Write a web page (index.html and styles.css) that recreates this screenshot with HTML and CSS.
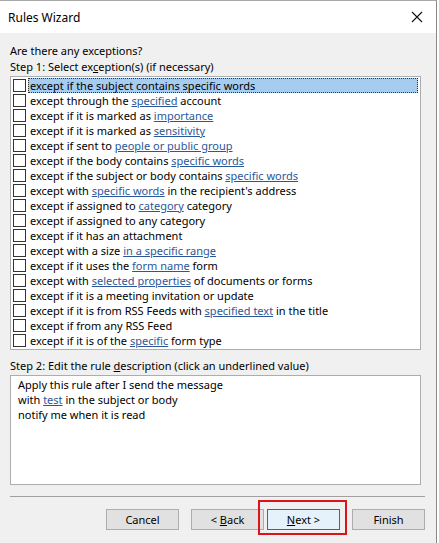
FILE: index.html
```html
<!DOCTYPE html>
<html lang="en">
<head>
  <meta charset="UTF-8">
  <title>Rules Wizard</title>
  <link rel="stylesheet" href="styles.css">
</head>
<body>

  <div class="dialog">
    <!-- Barra de título -->
    <div class="titlebar">
      <span class="title">Rules Wizard</span>
      <svg class="close" width="12" height="12" viewBox="0 0 12 12">
        <path d="M1 1 L11 11 M11 1 L1 11" stroke="#111" stroke-width="1.1" fill="none"/>
      </svg>
    </div>

    <div class="content">
      <p class="prompt">Are there any exceptions?</p>
      <p class="step">Step 1: Select ex<u>c</u>eption(s) (if necessary)</p>

      <!-- Lista de exceções -->
      <ul class="list">
        <li class="row selected"><span class="check"></span><span class="label">except if the subject contains specific words</span></li>
        <li class="row"><span class="check"></span><span class="label">except through the <a>specified</a> account</span></li>
        <li class="row"><span class="check"></span><span class="label">except if it is marked as <a>importance</a></span></li>
        <li class="row"><span class="check"></span><span class="label">except if it is marked as <a>sensitivity</a></span></li>
        <li class="row"><span class="check"></span><span class="label">except if sent to <a>people or public group</a></span></li>
        <li class="row"><span class="check"></span><span class="label">except if the body contains <a>specific words</a></span></li>
        <li class="row"><span class="check"></span><span class="label">except if the subject or body contains <a>specific words</a></span></li>
        <li class="row"><span class="check"></span><span class="label">except with <a>specific words</a> in the recipient's address</span></li>
        <li class="row"><span class="check"></span><span class="label">except if assigned to <a>category</a> category</span></li>
        <li class="row"><span class="check"></span><span class="label">except if assigned to any category</span></li>
        <li class="row"><span class="check"></span><span class="label">except if it has an attachment</span></li>
        <li class="row"><span class="check"></span><span class="label">except with a size <a>in a specific range</a></span></li>
        <li class="row"><span class="check"></span><span class="label">except if it uses the <a>form name</a> form</span></li>
        <li class="row"><span class="check"></span><span class="label">except with <a>selected properties</a> of documents or forms</span></li>
        <li class="row"><span class="check"></span><span class="label">except if it is a meeting invitation or update</span></li>
        <li class="row"><span class="check"></span><span class="label">except if it is from RSS Feeds with <a>specified text</a> in the title</span></li>
        <li class="row"><span class="check"></span><span class="label">except if from any RSS Feed</span></li>
        <li class="row"><span class="check"></span><span class="label">except if it is of the <a>specific</a> form type</span></li>
      </ul>

      <p class="step step2">Step 2: Edit the rule <u>d</u>escription (click an underlined value)</p>

      <!-- Descrição da regra -->
      <div class="desc">
        <div>Apply this rule after I send the message</div>
        <div>with <a>test</a> in the subject or body</div>
        <div>notify me when it is read</div>
      </div>

      <hr class="divider">

      <div class="buttons">
        <button class="btn">Cancel</button>
        <button class="btn back">&lt; <u>B</u>ack</button>
        <span class="marked"><button class="btn default"><u>N</u>ext &gt;</button></span>
        <button class="btn finish">Finish</button>
      </div>
    </div>
  </div>

</body>
</html>
```

FILE: styles.css
```css
* {
  box-sizing: border-box;
  font-family: 'Noto Sans', 'Segoe UI', sans-serif;
}

body {
  margin: 0;
  padding: 0;
  background: #fff;
}

.dialog {
  width: 437px;
  height: 543px;
  background: #f0f0f0;
  border-top: 1px solid #aaa;
  border-right: 1px solid #8a8a8a;
  display: flex;
  flex-direction: column;
}

.titlebar {
  height: 32px;
  background: #fff;
  display: flex;
  align-items: center;
  justify-content: space-between;
  padding: 0 13px 0 8px;
}

.title {
  font-size: 12px;
  color: #000;
}

.content {
  padding: 10px 15px 0 10px;
  font-size: 11px;
  color: #000;
}

p {
  margin: 0;
  line-height: 16px;
  height: 16px;
}

.list {
  list-style: none;
  margin: 1px 0 0 0;
  padding: 1px 2px 1px 1px;
  background: #fff;
  border: 1px solid #adadad;
  height: 274px;
}

.row {
  display: flex;
  align-items: center;
  height: 15px;
}

.check {
  width: 13px;
  height: 13px;
  border: 1px solid #333;
  background: #fff;
  margin: 0 2px 0 1px;
  flex: none;
}

.label {
  flex: 1;
  height: 15px;
  line-height: 14px;
  padding-left: 1px;
  white-space: nowrap;
  border: 1px solid transparent;
}

.row.selected .label {
  background: #a6cdf0;
  border: 1px dotted #333;
}

a {
  color: #2b579a;
  text-decoration: underline;
}

.step2 {
  margin-top: 8px;
}

.desc {
  margin-top: 1px;
  height: 110px;
  background: #fff;
  border: 1px solid #adadad;
  padding: 1px 7px;
  line-height: 15px;
}

.divider {
  margin: 11px -4px 0 0;
  border: none;
  border-top: 1px solid #a0a0a0;
}

.buttons {
  display: flex;
  justify-content: flex-end;
  align-items: flex-start;
  height: 21px;
  margin: 12px -4px 0 0;
}

.btn {
  width: 73px;
  height: 21px;
  padding: 0;
  font-size: 11px;
  color: #000;
  background: #e1e1e1;
  border: 1px solid #adadad;
  margin-left: 12px;
}

.back {
  margin-left: 12px;
}

/* caixa vermelha em volta do Next */
.marked {
  position: relative;
  display: flex;
  height: 21px;
  margin-left: 3px;
}

.marked .btn {
  margin-left: 0;
}

.marked::after {
  content: '';
  position: absolute;
  left: -9px;
  right: -7px;
  top: -9px;
  bottom: -5px;
  border: 2px solid #d9141a;
}

.default {
  background: #e5f1fb;
  border: 1px solid #0078d7;
}
```
